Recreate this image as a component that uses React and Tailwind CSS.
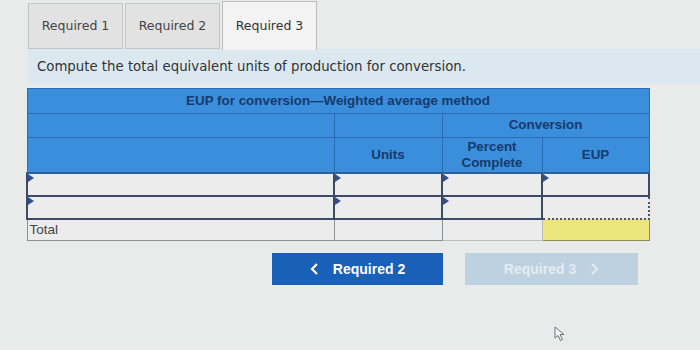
import React from "react";

const Flag = () => (
  <span className="absolute left-0 top-0 w-0 h-0 border-y-[4px] border-y-transparent border-l-[6px] border-l-[#34508a]" />
);

const InputCell = ({ dotted }) => (
  <td
    className={
      dotted
        ? "relative h-[23px] bg-[#ececec] border-2 border-dotted border-[#4a5570]"
        : "relative h-[23px] bg-[#ececec] border-2 border-[#3c4a68]"
    }
  >
    {!dotted && <Flag />}
  </td>
);

const App = () => {
  const tabs = ["Required 1", "Required 2", "Required 3"];

  return (
    <div className="relative w-[700px] h-[350px] overflow-hidden bg-[#e9ebeb] font-['DejaVu_Sans',sans-serif]">
      {/* tabs */}
      <div className="flex items-end pl-[28px] h-[49px] gap-[2px]">
        {tabs.map((t, i) =>
          i === 2 ? (
            <div
              key={t}
              className="w-[95px] h-[49px] -mb-px flex items-center justify-center bg-[#f3f3f3] border border-b-0 border-[#bcbcbc] text-[12.5px] text-[#333]"
            >
              {t}
            </div>
          ) : (
            <div
              key={t}
              className="w-[95px] h-[46px] flex items-center justify-center bg-[#e2e2e2] border border-[#c4c4c4] text-[12.5px] text-[#444] pt-[1px]"
            >
              {t}
            </div>
          )
        )}
      </div>

      {/* instruction */}
      <div className="ml-[28px] h-[35px] bg-[#dbe8f0] flex items-center pl-[9px] text-[13.3px] text-[#333]">
        Compute the total equivalent units of production for conversion.
      </div>

      {/* table */}
      <table className="ml-[26px] mt-[4px] w-[622px] table-fixed border-collapse font-['Liberation_Sans',sans-serif] text-[13.4px]">
        <colgroup>
          <col className="w-[307px]" />
          <col className="w-[108px]" />
          <col className="w-[100px]" />
          <col className="w-[107px]" />
        </colgroup>
        <thead className="bg-[#3a8edc] text-[#173a6c] font-bold">
          <tr>
            <th colSpan={4} className="h-[25px] border border-[#2a6cb4] font-bold">
              EUP for conversion—Weighted average method
            </th>
          </tr>
          <tr>
            <th className="h-[24px] border border-[#2a6cb4]" />
            <th className="border border-[#2a6cb4]" />
            <th colSpan={2} className="border border-[#2a6cb4] font-bold">
              Conversion
            </th>
          </tr>
          <tr>
            <th className="h-[35px] border border-[#2a6cb4] border-b-2 border-b-[#2f5d96]" />
            <th className="border border-[#2a6cb4] border-b-2 border-b-[#2f5d96] font-bold">Units</th>
            <th className="border border-[#2a6cb4] border-b-2 border-b-[#2f5d96] font-bold leading-[16px]">
              Percent
              <br />
              Complete
            </th>
            <th className="border border-[#2a6cb4] border-b-2 border-b-[#2f5d96] font-bold">EUP</th>
          </tr>
        </thead>
        <tbody>
          <tr>
            <InputCell />
            <InputCell />
            <InputCell />
            <InputCell />
          </tr>
          <tr>
            <InputCell />
            <InputCell />
            <InputCell />
            <InputCell dotted />
          </tr>
          <tr>
            <td className="h-[22px] bg-[#ececec] border border-[#8a8f98] pl-[2px] text-[#444] text-[13.5px]">
              Total
            </td>
            <td className="bg-[#ececec] border border-[#8a8f98]" />
            <td className="bg-[#ececec] border border-[#b9bcc2]" />
            <td className="bg-[#ece57e] border border-[#8f8a5a]" />
          </tr>
        </tbody>
      </table>

      {/* nav buttons */}
      <div className="flex gap-[22px] pl-[272px] mt-[12px] font-['Liberation_Sans',sans-serif]">
        <div className="w-[171px] h-[32px] bg-[#1860b8] flex items-center justify-center gap-[14px] text-white text-[14px] font-bold">
          <svg width="9" height="12" viewBox="0 0 9 12" fill="none">
            <path d="M7 1 L2 6 L7 11" stroke="white" strokeWidth="2.2" />
          </svg>
          <span>Required 2</span>
        </div>
        <div className="w-[173px] h-[32px] bg-[#bed1e1] flex items-center justify-center gap-[14px] text-[#e4ecf2] text-[14px] font-bold">
          <span>Required 3</span>
          <svg width="9" height="12" viewBox="0 0 9 12" fill="none">
            <path d="M2 1 L7 6 L2 11" stroke="#e4ecf2" strokeWidth="2.2" />
          </svg>
        </div>
      </div>

      {/* mouse pointer */}
      <svg className="absolute left-[554px] top-[326px]" width="12" height="16" viewBox="0 0 12 16">
        <path d="M1 1 L1 12 L4 9.5 L6.5 14.5 L8.5 13.5 L6 8.5 L10 8.5 Z" fill="#f2f4f4" stroke="#6b7278" strokeWidth="1" />
      </svg>
    </div>
  );
};

export default App;
